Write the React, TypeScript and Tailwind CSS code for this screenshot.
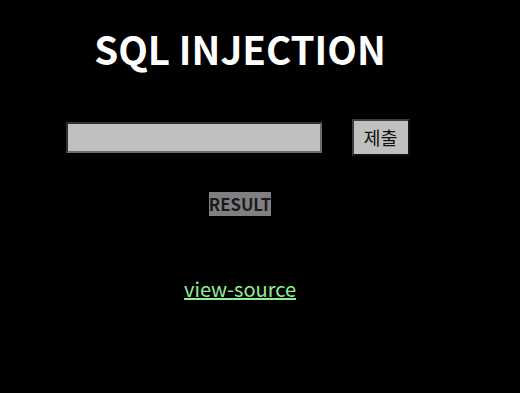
export default function App() {
  return (
    <div className="min-h-[393px] w-full bg-black font-['Noto_Sans_CJK_KR','Noto_Sans',sans-serif]">
      <div className="flex w-[480px] flex-col items-center">
        <h1 className="mt-[22px] text-[38.5px] font-bold leading-[52px] text-white">SQL INJECTION</h1>

        <form className="mr-[5px] mt-[45px] flex items-center gap-[30px]" onSubmit={(e) => e.preventDefault()}>
          <input
            type="text"
            className="h-[31px] w-[256px] border-2 border-t-[#2e2e2e] border-l-[#2e2e2e] border-b-[#6b6b6b] border-r-[#6b6b6b] bg-[#c0c0c0] outline-none"
          />
          <button
            type="submit"
            className="h-[37px] w-[58px] border-2 border-t-[#3c3c3c] border-l-[#3c3c3c] border-b-[#111] border-r-[#111] bg-[#c0c0c0] text-[18.5px] text-[#111]"
          >
            제출
          </button>
        </form>

        <div className="mt-[36px] bg-[#808080] text-[16.7px] font-bold leading-[24px] text-[#1a1a22]">RESULT</div>

        <a href="#" className="mt-[58px] text-[20px] text-[#90ee90] underline">view-source</a>
      </div>
    </div>
  );
}
